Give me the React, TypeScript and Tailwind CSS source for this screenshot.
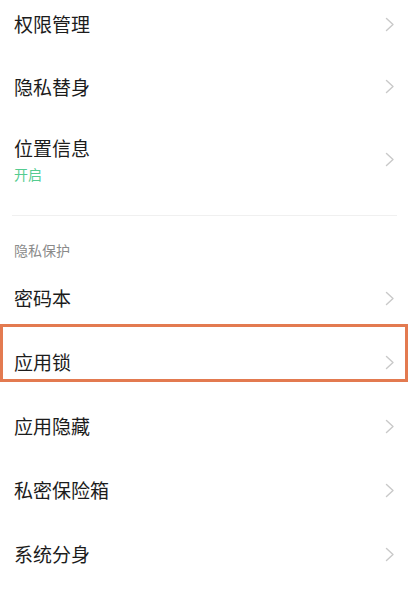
import React from "react"

const font = { fontFamily: '"Noto Sans CJK SC", "Noto Sans", sans-serif' }

function Chevron() {
  return (
    <svg width="10" height="15" viewBox="0 0 10 15" className="shrink-0">
      <polyline points="1.5,1.5 8,7.5 1.5,13.5" fill="none" stroke="#c9c9c9" strokeWidth="1.4" strokeLinejoin="round" strokeLinecap="round" />
    </svg>
  )
}

function Row({ title, sub, className = "h-[64px]" }: { title: string; sub?: string; className?: string }) {
  return (
    <div className={`flex items-center justify-between pl-[14px] pr-[14px] ${className}`}>
      <div className="flex flex-col">
        <span className="text-[19px] leading-[26px] text-[#1c1c1c]">{title}</span>
        {sub && <span className="mt-[4px] text-[14px] leading-[18px] text-[#55cc90]">{sub}</span>}
      </div>
      <Chevron />
    </div>
  )
}

export default function App() {
  return (
    <div className="relative w-[409px] h-[591px] overflow-hidden bg-white" style={font}>
      <Row title="权限管理" className="h-[55px] pb-[7px]" />
      <Row title="隐私替身" className="h-[63px]" />
      <Row title="位置信息" sub="开启" className="h-[82px]" />

      <div className="mx-[12px] mt-[15px] h-px bg-[#f0f0f0]" />

      <div className="pl-[14px] pt-[24px] pb-[6px] text-[14px] leading-[20px] text-[#8a8a8a]">隐私保护</div>

      <Row title="密码本" />
      <Row title="应用锁" />
      <Row title="应用隐藏" />
      <Row title="私密保险箱" />
      <Row title="系统分身" />

      {/* highlight annotation */}
      <div className="absolute left-0 top-[324px] w-[408px] h-[58px] border-[3px] border-[#e37a50]" />
    </div>
  )
}
